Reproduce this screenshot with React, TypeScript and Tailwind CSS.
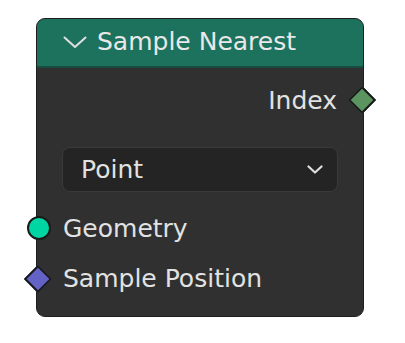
import React from "react";

const font = { fontFamily: '"DejaVu Sans", "Liberation Sans", sans-serif' };

export default function App() {
  return (
    <div className="w-[405px] h-[343px] bg-white pt-[18px] pl-[36px]" style={font}>
      <div className="relative w-[328px] rounded-[9px] border border-[#1e1e1e] bg-[#303030] flex flex-col">
        <div className="h-[49px] rounded-t-[8px] bg-[#1d725e] border-b-2 border-[#1a4d41] flex items-center pl-[26px] gap-[10px] text-[25px] text-[#e8e8e8]">
          <svg width="24" height="13" viewBox="0 0 24 13" fill="none">
            <path d="M1.5 1.5 L12 11 L22.5 1.5" stroke="#e0e0e0" strokeWidth="2" strokeLinecap="round" strokeLinejoin="round" />
          </svg>
          <span className="leading-none pb-[2px]">Sample Nearest</span>
        </div>
        <div className="flex flex-col pt-[7px] pb-[13px] text-[25px] text-[#e2e2e2]">
          <div className="relative h-[50px] flex items-center justify-end pr-[26px]">
            <span className="leading-none">Index</span>
            <div className="absolute right-[-9px] top-[15px] w-[20px] h-[20px] rotate-45 bg-[#5b9460] border-2 border-[#1a1a1a]" />
          </div>
          <div className="mt-[22px] mx-[25px] h-[45px] rounded-[8px] bg-[#242424] border border-[#3a3a3a] flex items-center justify-between pl-[18px] pr-[14px]">
            <span className="leading-none">Point</span>
            <svg width="16" height="9" viewBox="0 0 16 9" fill="none">
              <path d="M1.5 1.5 L8 7.5 L14.5 1.5" stroke="#e0e0e0" strokeWidth="2.2" strokeLinecap="round" strokeLinejoin="round" />
            </svg>
          </div>
          <div className="relative mt-[11px] h-[50px] flex items-center pl-[26px]">
            <span className="leading-none">Geometry</span>
            <div className="absolute left-[-10px] top-[13px] w-[24px] h-[24px] rounded-full bg-[#00d6a3] border-2 border-[#1a1a1a]" />
          </div>
          <div className="relative h-[50px] flex items-center pl-[26px]">
            <span className="leading-none">Sample Position</span>
            <div className="absolute left-[-9px] top-[16px] w-[20px] h-[20px] rotate-45 bg-[#6363c7] border-2 border-[#1a1a1a]" />
          </div>
        </div>
      </div>
    </div>
  );
}
